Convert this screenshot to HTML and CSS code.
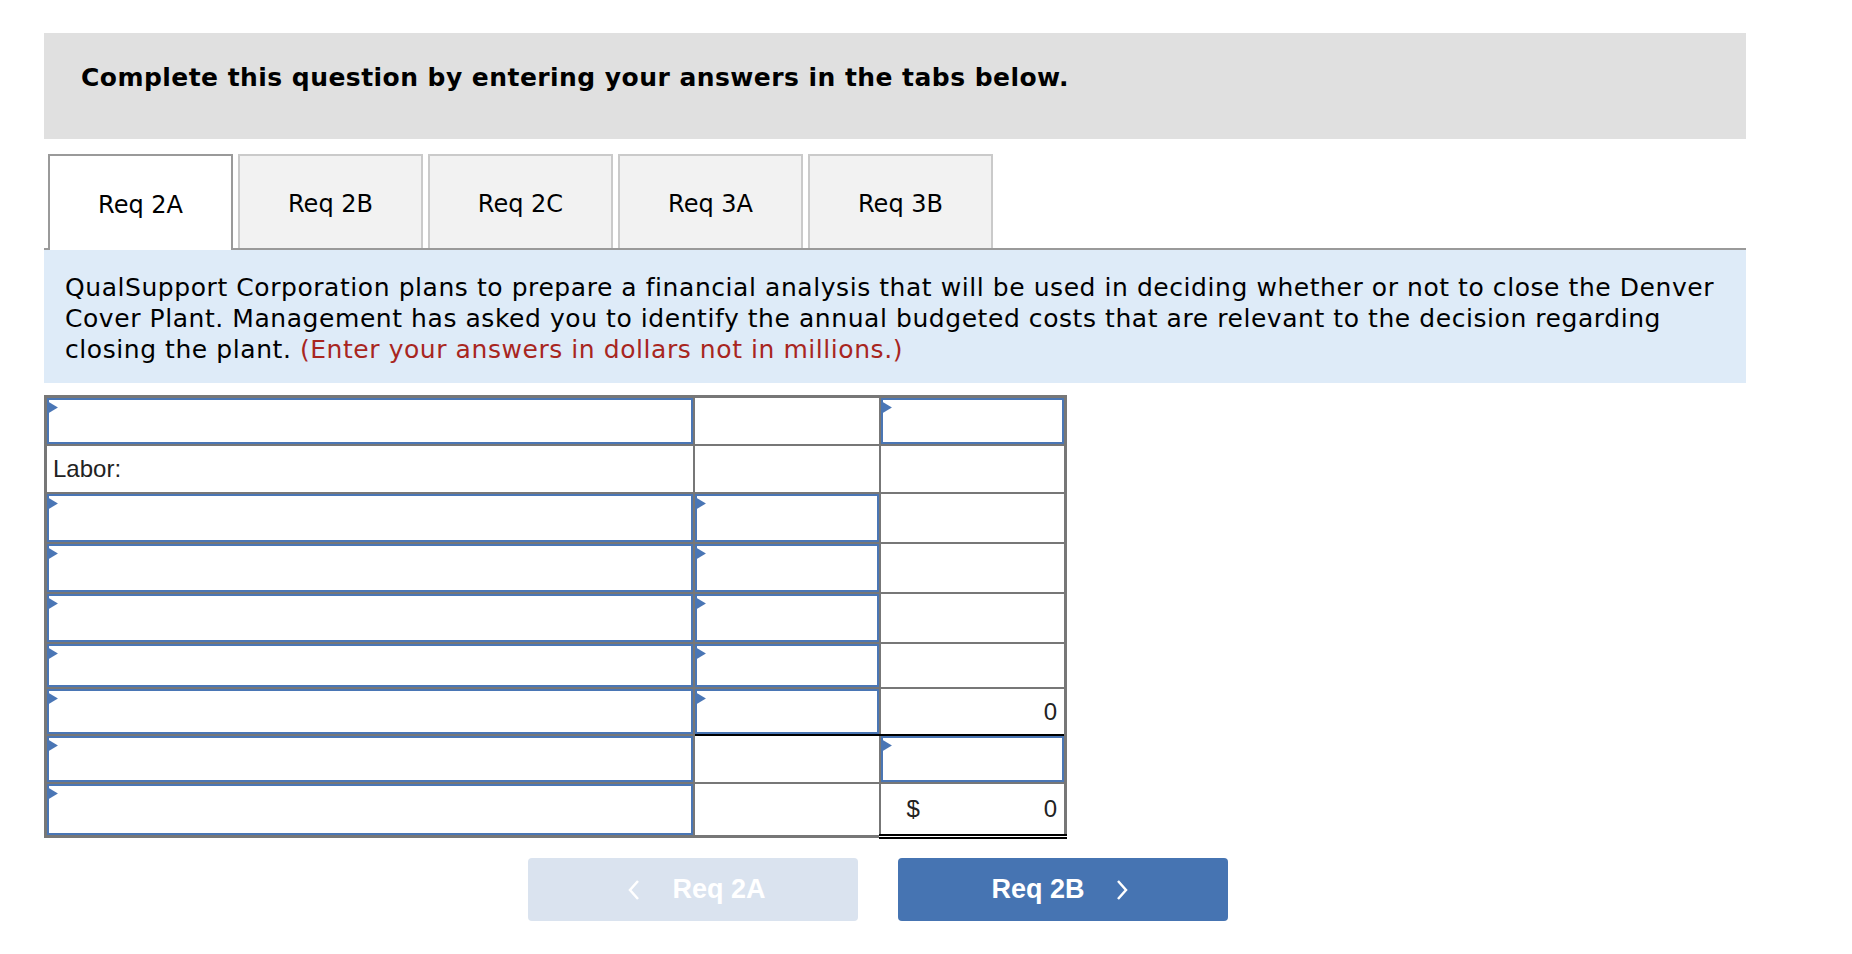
FILE: index.html
```html
<!DOCTYPE html>
<html>
<head>
<meta charset="utf-8">
<link rel="stylesheet" href="styles.css">
</head>
<body>
<div class="page">
  <div class="header">Complete this question by entering your answers in the tabs below.</div>
  <div class="tabs">
    <div class="tab active">Req 2A</div>
    <div class="tab">Req 2B</div>
    <div class="tab">Req 2C</div>
    <div class="tab">Req 3A</div>
    <div class="tab">Req 3B</div>
  </div>
  <div class="prompt">QualSupport Corporation plans to prepare a financial analysis that will be used in deciding whether or not to close the Denver Cover Plant. Management has asked you to identify the annual budgeted costs that are relevant to the decision regarding closing the plant. <span class="note">(Enter your answers in dollars not in millions.)</span></div>
  <table class="grid">
    <colgroup><col class="c1"><col class="c2"><col class="c3"></colgroup>
    <tr class="r1">
      <td class="in"><svg class="tri" viewBox="0 0 10 12"><path d="M0 0L10 6L0 12Z"/></svg></td>
      <td></td>
      <td class="in"><svg class="tri" viewBox="0 0 10 12"><path d="M0 0L10 6L0 12Z"/></svg></td>
    </tr>
    <tr class="r2">
      <td class="lbl">Labor:</td>
      <td></td>
      <td></td>
    </tr>
    <tr class="r3">
      <td class="in"><svg class="tri" viewBox="0 0 10 12"><path d="M0 0L10 6L0 12Z"/></svg></td>
      <td class="in"><svg class="tri" viewBox="0 0 10 12"><path d="M0 0L10 6L0 12Z"/></svg></td>
      <td></td>
    </tr>
    <tr class="r3">
      <td class="in"><svg class="tri" viewBox="0 0 10 12"><path d="M0 0L10 6L0 12Z"/></svg></td>
      <td class="in"><svg class="tri" viewBox="0 0 10 12"><path d="M0 0L10 6L0 12Z"/></svg></td>
      <td></td>
    </tr>
    <tr class="r3">
      <td class="in"><svg class="tri" viewBox="0 0 10 12"><path d="M0 0L10 6L0 12Z"/></svg></td>
      <td class="in"><svg class="tri" viewBox="0 0 10 12"><path d="M0 0L10 6L0 12Z"/></svg></td>
      <td></td>
    </tr>
    <tr class="r6">
      <td class="in"><svg class="tri" viewBox="0 0 10 12"><path d="M0 0L10 6L0 12Z"/></svg></td>
      <td class="in"><svg class="tri" viewBox="0 0 10 12"><path d="M0 0L10 6L0 12Z"/></svg></td>
      <td></td>
    </tr>
    <tr class="r7">
      <td class="in"><svg class="tri" viewBox="0 0 10 12"><path d="M0 0L10 6L0 12Z"/></svg></td>
      <td class="in tot"><svg class="tri" viewBox="0 0 10 12"><path d="M0 0L10 6L0 12Z"/></svg></td>
      <td class="num tot">0</td>
    </tr>
    <tr class="r8">
      <td class="in"><svg class="tri" viewBox="0 0 10 12"><path d="M0 0L10 6L0 12Z"/></svg></td>
      <td></td>
      <td class="in"><svg class="tri" viewBox="0 0 10 12"><path d="M0 0L10 6L0 12Z"/></svg></td>
    </tr>
    <tr class="r9">
      <td class="in"><svg class="tri" viewBox="0 0 10 12"><path d="M0 0L10 6L0 12Z"/></svg></td>
      <td></td>
      <td class="num dbl"><div class="money"><span>$</span><span>0</span></div></td>
    </tr>
  </table>
  <div class="nav">
    <div class="btn prev"><svg class="chev" viewBox="0 0 12 22"><path d="M10 2L2 11L10 20"/></svg><span>Req 2A</span></div>
    <div class="btn next"><span>Req 2B</span><svg class="chev" viewBox="0 0 12 22"><path d="M2 2L10 11L2 20"/></svg></div>
  </div>
</div>
</body>
</html>
```
FILE: styles.css
```css
html, body {
  margin: 0;
  padding: 0;
  background: #fff;
}
.page {
  margin-left: 44px;
  width: 1702px;
  padding-top: 33px;
  font-family: "DejaVu Sans", Verdana, sans-serif;
  color: #000;
}
.header {
  box-sizing: border-box;
  height: 106px;
  background: #e0e0e0;
  padding: 30px 0 0 37px;
  font-weight: bold;
  font-size: 25px;
  letter-spacing: 0.45px;
  line-height: 30px;
}
.tabs {
  margin-top: 15px;
  display: flex;
  gap: 5px;
  padding-left: 4px;
  border-bottom: 2px solid #9a9a9a;
  height: 94px;
}
.tab {
  box-sizing: border-box;
  width: 185px;
  height: 94px;
  background: #f2f2f2;
  border: 2px solid #cacaca;
  border-bottom: none;
  display: flex;
  align-items: center;
  justify-content: center;
  padding-top: 3px;
  font-size: 24px;
  line-height: 28px;
}
.tab.active {
  background: #fff;
  border-color: #9a9a9a;
  height: 96px;
  margin-bottom: -2px;
}
.prompt {
  background: #deebf8;
  padding: 22px 0 18px 21px;
  font-size: 25px;
  letter-spacing: 0.56px;
  line-height: 31px;
  height: 93px;
}
.note {
  color: #a8261f;
}
.grid {
  margin-top: 12px;
  border-collapse: collapse;
  border: 3px solid #777;
  font-family: "Liberation Sans", Arial, sans-serif;
  font-size: 24px;
  color: #222;
}
.grid td {
  border: 2px solid #777;
  padding: 0;
}
.c1 { width: 648px; }
.c2 { width: 186px; }
.c3 { width: 186px; }
.r1 td { height: 43px; }
.r2 td { height: 46px; }
.r3 td { height: 45px; }
.r6 td { height: 40px; }
.r7 td { height: 42px; }
.r8 td { height: 43px; }
.r9 td { height: 48px; }
.grid td.in {
  vertical-align: top;
  box-shadow: inset 0 0 0 2px #4a76b5;
  padding: 3px 0 0 0;
}
.tri {
  display: block;
  width: 11px;
  height: 13px;
  fill: #4a76b5;
}
.grid td.lbl {
  padding-left: 6px;
  vertical-align: middle;
}
.grid td.num {
  text-align: right;
  padding-right: 7px;
  vertical-align: middle;
}
.grid td.tot {
  border-bottom: 2px solid #000;
}
.grid td.dbl {
  border-bottom: 5px double #000;
}
.money {
  display: flex;
  justify-content: space-between;
  padding-left: 26px;
}
.nav {
  margin-top: 19px;
  margin-left: 484px;
  display: flex;
  gap: 40px;
}
.btn {
  box-sizing: border-box;
  height: 63px;
  border-radius: 4px;
  display: flex;
  align-items: center;
  justify-content: center;
  font-family: "Liberation Sans", Arial, sans-serif;
  font-weight: bold;
  font-size: 27px;
  color: #fff;
}
.prev {
  width: 330px;
  background: #dae3ef;
  gap: 32px;
  padding-left: 8px;
}
.next {
  width: 330px;
  background: #4674b2;
  gap: 31px;
  padding-right: 7px;
}
.chev {
  width: 12px;
  height: 22px;
  fill: none;
  stroke: #fff;
  stroke-width: 2.5px;
}
```
